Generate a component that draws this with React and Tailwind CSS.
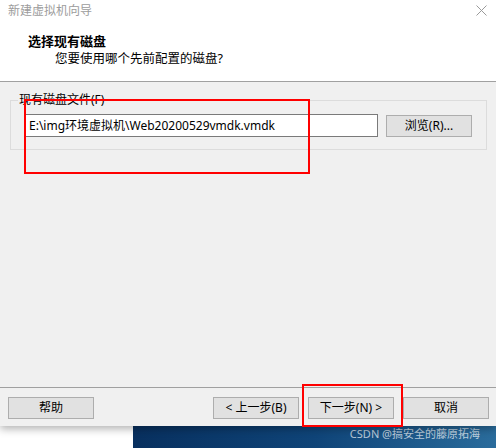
import React from 'react';

const font = "font-['Noto_Sans','Noto_Sans_CJK_SC',sans-serif]";

function WinButton({ children }) {
    return (
        <button className="w-[86px] h-[22px] bg-[#e1e1e1] border border-[#adadad] text-[12px] leading-none text-black flex items-center justify-center">
            {children}
        </button>
    );
}

export default function App() {
    return (
        <div className={`relative w-[496px] h-[448px] overflow-hidden bg-white flex flex-col ${font}`}>
            {/* Dialog */}
            <div className="relative z-10 h-[426px] flex flex-col bg-[#f0f0f0] shadow-[0_3px_8px_rgba(0,0,0,0.3)]">
                {/* Header */}
                <div className="h-[81px] bg-white border-b border-[#a0a0a0] box-content">
                    <div className="h-[21px] flex items-center justify-between pl-[8px] pr-[9px]">
                        <span className="text-[12px] text-[#9c9c9c]">新建虚拟机向导</span>
                        <svg width="11" height="11" viewBox="0 0 11 11">
                            <path d="M0.5 0.5 L10.5 10.5 M10.5 0.5 L0.5 10.5" stroke="#9a9a9a" strokeWidth="1" />
                        </svg>
                    </div>
                    <h2 className="mt-[11px] pl-[28px] text-[13px] leading-[18px] font-bold text-black">选择现有磁盘</h2>
                    <p className="pl-[55px] text-[12.5px] leading-[18px] text-black">您要使用哪个先前配置的磁盘?</p>
                </div>

                {/* Content */}
                <div className="flex-1 px-[10px] pt-[10px]">
                    <fieldset className="w-[477px] border border-[#dcdcdc] px-[14px] pt-[6px] pb-[12px]">
                        <legend className="-ml-[7px] px-[1px] text-[12px] leading-[16px] text-black">现有磁盘文件(F)</legend>
                        <div className="flex items-center gap-[8px]">
                            <div className="flex-1 h-[23px] bg-white border border-[#7a7a7a] flex items-center pl-[3px] text-[12px] text-black">
                                E:\img环境虚拟机\Web20200529vmdk.vmdk
                            </div>
                            <WinButton>浏览(R)...</WinButton>
                        </div>
                    </fieldset>
                </div>

                {/* Footer */}
                <div className="h-[39px] border-t border-[#a0a0a0] flex items-start pt-[9px] pl-[8px] pr-[7px]">
                    <WinButton>帮助</WinButton>
                    <div className="ml-auto flex gap-[9px]">
                        <WinButton>&lt; 上一步(B)</WinButton>
                        <WinButton>下一步(N) &gt;</WinButton>
                        <WinButton>取消</WinButton>
                    </div>
                </div>
            </div>

            {/* Desktop strip */}
            <div className="flex-1 flex">
                <div className="w-[133px] bg-white" />
                <div className="flex-1 bg-gradient-to-r from-[#08305f] via-[#0f4478] to-[#2a6c9c] flex items-start justify-end pr-[16px]">
                    <span className="text-[11px] leading-[15px] text-white/70">CSDN @搞安全的藤原拓海</span>
                </div>
            </div>

            {/* Red highlight boxes */}
            <div className="absolute z-20 left-[24px] top-[99px] w-[286px] h-[75px] border-2 border-[#ff0000]" />
            <div className="absolute z-20 left-[302px] top-[384px] w-[101px] h-[43px] border-2 border-[#ff0000]" />
        </div>
    );
}
